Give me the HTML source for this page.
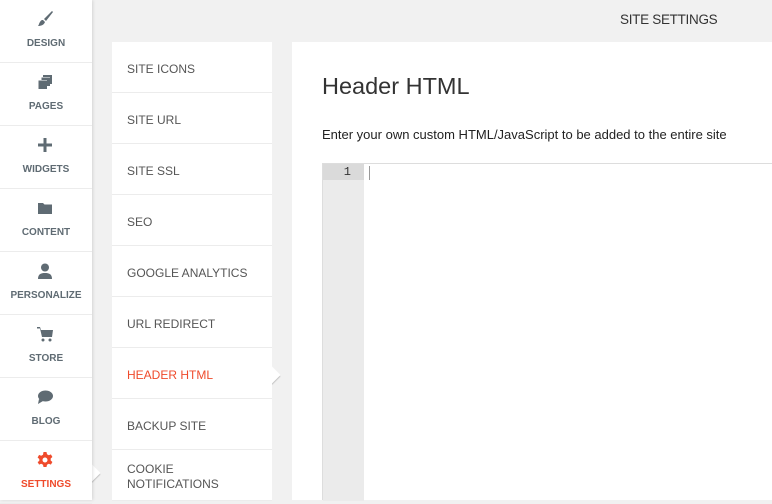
<!DOCTYPE html>
<html><head><meta charset="utf-8"><style>
*{margin:0;padding:0;box-sizing:border-box}
body{width:772px;height:500px;overflow:hidden;background:#f1f1f1;font-family:"Liberation Sans",sans-serif;position:relative}
.side{position:absolute;left:0;top:0;width:92px;height:500px;background:#fff;box-shadow:1px 0 3px rgba(0,0,0,.12)}
.it{height:63px;border-bottom:1px solid #ececec;text-align:center;color:#5f6b73;font-weight:bold;font-size:10px;position:relative}
.it svg{position:absolute;left:36px;top:10px;width:18px;height:18px;fill:#5f6b73}
.it span{position:absolute;left:0;right:0;top:38px}
.it.on{color:#ef4b2c}.it.on svg{fill:#ef4b2c}
.arrow{position:absolute;width:12px;height:12px;background:#fff;transform:rotate(45deg);box-shadow:1px 1px 1px rgba(0,0,0,.2)}
.top{position:absolute;left:620px;top:12px;font-size:13.5px;letter-spacing:-.3px;color:#333}
.sub{position:absolute;left:112px;top:42px;width:160px;height:458px;background:#fff}
.sub div{height:51px;border-bottom:1px solid #ececec;padding-left:15px;padding-top:4px;font-size:12px;color:#555;display:flex;align-items:center;line-height:15px}
.sub .on{color:#ef4b2c}
.main{position:absolute;left:292px;top:42px;width:480px;height:458px;background:#fff}
h1{position:absolute;left:30px;top:31px;font-weight:normal;font-size:23.5px;color:#333}
p{position:absolute;left:30px;top:85px;font-size:13px;color:#222}
.ed{position:absolute;left:30px;top:121px;width:450px;height:337px;border-top:1px solid #ddd;border-left:1px solid #ddd}
.gut{position:absolute;left:0;top:0;width:41px;height:337px;background:#ebebeb}
.ln{position:absolute;left:0;top:0;width:41px;height:16px;background:#dadada;font-family:"Liberation Mono",monospace;font-size:12px;text-align:right;padding-right:13px;line-height:16px;color:#333}
.cur{position:absolute;left:46px;top:2px;width:1px;height:14px;background:#999}
</style></head><body>
<div class="arrow" style="left:86px;top:467px"></div>
<div class="arrow" style="left:266px;top:369px"></div>
<div class="side">
<div class="it"><svg viewBox="0 0 18 18"><path d="M16 1l1 1-7 9-2-2z M7 10l2 2c-1 3-4 4-7 4 1-1 1-3 2-4 1-2 2-2 3-2z"/></svg><span>DESIGN</span></div>
<div class="it"><svg viewBox="0 0 18 18"><rect x="7" y="2" width="9" height="9"/><rect x="5" y="4" width="9" height="9" fill="#fff"/><rect x="5.5" y="4.5" width="8.5" height="8.5"/><rect x="2" y="7" width="9" height="9" fill="#fff"/><rect x="2.5" y="7.5" width="8.5" height="8.5"/></svg><span>PAGES</span></div>
<div class="it"><svg viewBox="0 0 18 18"><rect x="7.5" y="2" width="3" height="14"/><rect x="2" y="7.5" width="14" height="3"/></svg><span>WIDGETS</span></div>
<div class="it"><svg viewBox="0 0 18 18"><path d="M2 4h5l1.5 1.5H16V15H2z"/></svg><span>CONTENT</span></div>
<div class="it"><svg viewBox="0 0 18 18"><circle cx="9" cy="5.5" r="4"/><path d="M2 17c0-5 3-6 7-6s7 1 7 6z"/></svg><span>PERSONALIZE</span></div>
<div class="it"><svg viewBox="0 0 18 18"><path d="M1 2h3l1 3h12l-1 7H6L4 3.5H1z"/><circle cx="7" cy="15" r="1.5"/><circle cx="14" cy="15" r="1.5"/></svg><span>STORE</span></div>
<div class="it"><svg viewBox="0 0 18 18"><ellipse cx="9.5" cy="8" rx="7.5" ry="5.5"/><path d="M3 11l-1 5 5-3z"/></svg><span>BLOG</span></div>
<div class="it on"><svg viewBox="0 0 18 18"><path d="M7.5 1h3l.5 2.2 1.8 1 2.1-.8 1.5 2.6-1.7 1.5v2l1.7 1.5-1.5 2.6-2.1-.8-1.8 1-.5 2.2h-3l-.5-2.2-1.8-1-2.1.8-1.5-2.6L3.3 10V8L1.6 6.5 3.1 3.9l2.1.8 1.8-1z"/><circle cx="9" cy="9" r="2.5" fill="#fff"/></svg><span>SETTINGS</span></div>
</div>
<div class="top">SITE SETTINGS</div>
<div class="sub">
<div>SITE ICONS</div><div>SITE URL</div><div>SITE SSL</div><div>SEO</div><div>GOOGLE ANALYTICS</div><div>URL REDIRECT</div><div class="on">HEADER HTML</div><div>BACKUP SITE</div><div>COOKIE<br>NOTIFICATIONS</div>
</div>
<div class="main">
<h1>Header HTML</h1>
<p>Enter your own custom HTML/JavaScript to be added to the entire site</p>
<div class="ed"><div class="gut"></div><div class="ln">1</div><div class="cur"></div></div>
</div>
</body></html>
